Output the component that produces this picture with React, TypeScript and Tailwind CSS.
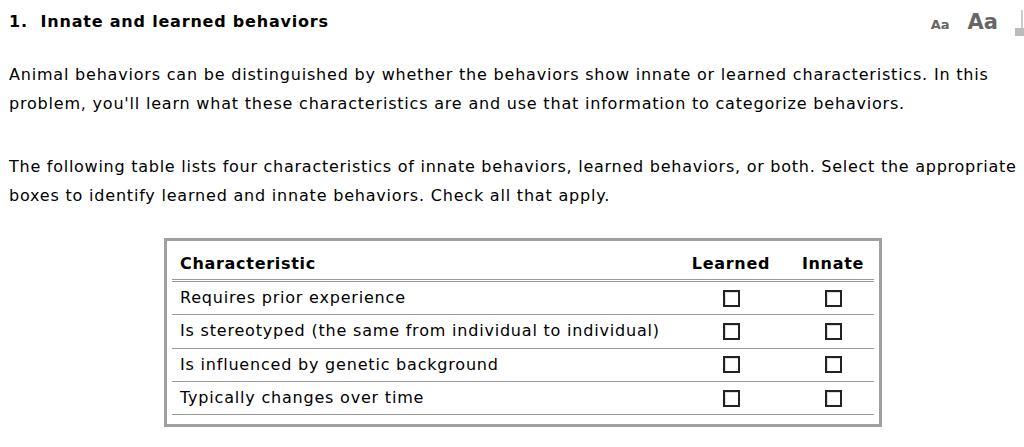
import React from "react";

const rows = [
  "Requires prior experience",
  "Is stereotyped (the same from individual to individual)",
  "Is influenced by genetic background",
  "Typically changes over time",
];

function Box() {
  return (
    <span className="inline-block w-[17px] h-[17px] border-2 border-[#222] bg-white shadow-[inset_1px_1px_0_#ddd] align-middle" />
  );
}

export default function App() {
  return (
    <div className="w-[1024px] h-[447px] bg-white text-black overflow-hidden relative" style={{ fontFamily: '"DejaVu Sans", Verdana, sans-serif' }}>
      <div className="flex items-center justify-between pl-[9px] pt-[10px] h-[34px]">
        <div className="text-[16px] font-bold tracking-[0.8px] leading-[24px]">1.&nbsp; Innate and learned behaviors</div>
        <div className="flex items-center gap-[18px] pr-[26px] text-[#666] font-bold">
          <span className="text-[13px] leading-none mt-[5px]">Aa</span>
          <span className="text-[21px] leading-none">Aa</span>
        </div>
      </div>
      <div className="absolute right-0 top-[10px] w-[9px] h-[26px]">
        <div className="absolute left-[6px] top-0 w-[2px] h-[20px] bg-[#ccc]" />
        <div className="absolute left-0 top-[18px] w-[9px] h-[8px] bg-[#bbb]" />
      </div>
      <div className="pl-[9px] w-[1040px] mt-[26px] text-[16px] leading-[29px] whitespace-nowrap">
        <p className="tracking-[0.8px]">
          Animal behaviors can be distinguished by whether the behaviors show innate or learned characteristics. In this
          <br />
          problem, you'll learn what these characteristics are and use that information to categorize behaviors.
        </p>
        <p className="mt-[34px] tracking-[0.74px]">
          The following table lists four characteristics of innate behaviors, learned behaviors, or both. Select the appropriate
          <br />
          <span className="tracking-[0.8px]">boxes to identify learned and innate behaviors. Check all that apply.</span>
        </p>
      </div>
      <div className="ml-[164px] mt-[28px] w-[718px] border-[3px] border-[#a0a0a0] px-[5px] pt-[7px] pb-[9px]">
        <div className="flex items-center h-[34px] border-b-[3px] border-double border-[#999] text-[16px] font-bold tracking-[0.7px]">
          <div className="flex-1 pl-[8px]">Characteristic</div>
          <div className="w-[122px] text-center">Learned</div>
          <div className="w-[82px] text-center">Innate</div>
        </div>
        {rows.map((r) => (
          <div key={r} className="flex items-center h-[33.3px] border-b border-[#999] text-[16px] tracking-[0.8px]">
            <div className="flex-1 pl-[8px]">{r}</div>
            <div className="w-[122px] flex justify-center"><Box /></div>
            <div className="w-[82px] flex justify-center"><Box /></div>
          </div>
        ))}
      </div>
    </div>
  );
}
